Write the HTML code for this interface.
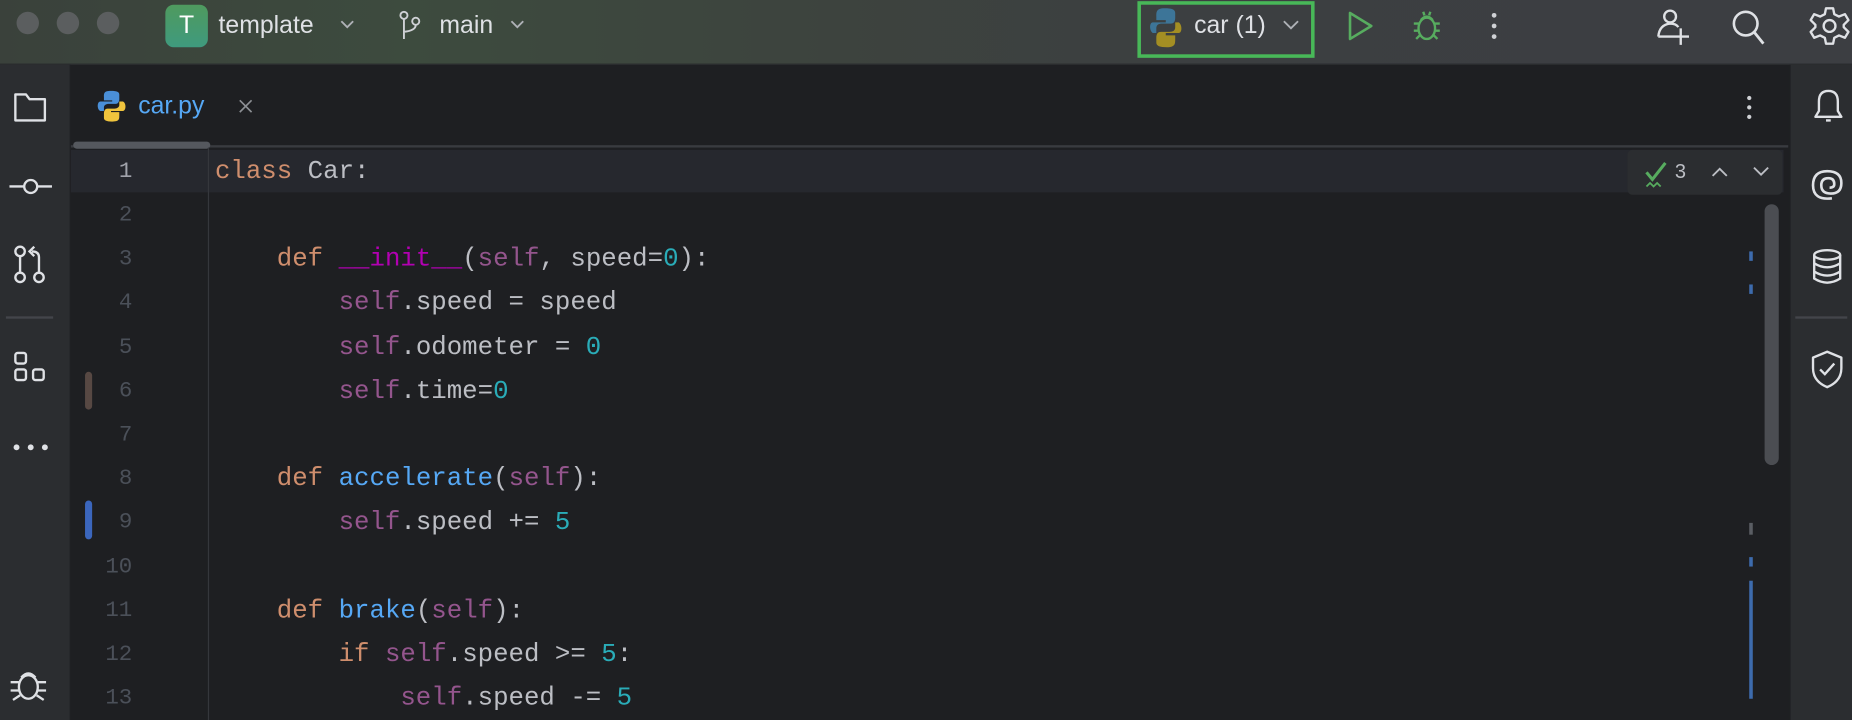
<!DOCTYPE html>
<html><head><meta charset="utf-8"><style>
html,body{margin:0;padding:0;background:#1e1f22;overflow:hidden;width:1852px;height:720px}
#w{position:absolute;left:0;top:0;width:1568px;height:610px;transform-origin:0 0;transform:scale(1.18112,1.18033);font-family:"Liberation Sans",sans-serif;background:#1e1f22}
.abs{position:absolute}
#title{left:0;top:0;width:1568px;height:54px;background:linear-gradient(90deg,#3a413b 0%,#3d4b3e 22%,#3d433e 45%,#3c3f41 65%,#3c3e42 100%);border-bottom:1px solid #2b2d30}
.dot{width:19px;height:19px;border-radius:50%;background:#5b5e5f;top:10px}
.tt{color:#dfe1e5;font-size:21px;top:10px}
#left{left:0;top:55px;width:59px;height:555px;background:#2b2d30;border-right:1px solid #1e1f22}
#right{left:1515px;top:55px;width:53px;height:555px;background:#2b2d30;border-left:1px solid #1e1f22}
.code{font-family:"Liberation Mono",monospace;font-size:21.8px;color:#bcbec4;white-space:pre;left:182px;height:37px;line-height:37px}
.ln{font-family:"Liberation Mono",monospace;font-size:19px;color:#4b5059;width:60px;text-align:right;left:52px;height:37px;line-height:37px}
.k{color:#cf8e6d}.s{color:#94558d}.f{color:#56a8f5}.m{color:#b200b2}.n{color:#2aacb8}
svg{position:absolute;overflow:visible}
</style></head><body><div id="w">
<div id="title" class="abs"></div>
<div class="abs dot" style="left:14px"></div><div class="abs dot" style="left:48px"></div><div class="abs dot" style="left:82px"></div>
<div class="abs" style="left:140px;top:4px;width:36px;height:36px;border-radius:7px;background:linear-gradient(180deg,#4f9a5e,#3f9a7e);color:#fff;font-size:21px;text-align:center;line-height:36px">T</div>
<div class="abs tt" style="left:185px">template</div>
<svg style="left:288px;top:17px" width="12" height="8"><path d="M1 1 L6 6 L11 1" stroke="#aeb1b6" stroke-width="1.6" fill="none"/></svg>
<svg style="left:338px;top:9px" width="20" height="26"><circle cx="4" cy="4" r="3" stroke="#cfd1d5" stroke-width="1.6" fill="none"/><circle cx="14" cy="9" r="3" stroke="#cfd1d5" stroke-width="1.6" fill="none"/><path d="M4 7 V24 M14 12 Q14 17 4 18" stroke="#cfd1d5" stroke-width="1.6" fill="none"/></svg>
<div class="abs tt" style="left:372px">main</div>
<svg style="left:432px;top:17px" width="12" height="8"><path d="M1 1 L6 6 L11 1" stroke="#aeb1b6" stroke-width="1.6" fill="none"/></svg>
<div class="abs" style="left:963px;top:1px;width:144px;height:42px;border:3px solid #48b858"></div>
<svg style="left:972px;top:6px" width="32" height="34"><path d="M14 1 C7 1 7 4 7 8 V11 H15 V13 H4 C1 13 1 20 4 22 H7 V18 C7 15 9 14 12 14 H19 C22 14 23 12 23 9 V5 C23 2 20 1 14 1Z" fill="#3d7598"/><path d="M16 34 C23 34 23 31 23 27 V24 H15 V22 H26 C29 22 29 15 26 13 H23 V17 C23 20 21 21 18 21 H11 C8 21 7 23 7 26 V30 C7 33 10 34 16 34Z" fill="#a38e23"/></svg>
<div class="abs tt" style="left:1011px;color:#dfe1e5">car (1)</div>
<svg style="left:1086px;top:17px" width="14" height="9"><path d="M1 1 L7 7 L13 1" stroke="#aeb1b6" stroke-width="1.6" fill="none"/></svg>
<svg style="left:1141px;top:9px" width="22" height="26"><path d="M2 2 L20 13 L2 24 Z" stroke="#57ac5f" stroke-width="2.2" fill="none" stroke-linejoin="round"/></svg>
<svg style="left:1194px;top:8px" width="28" height="28"><ellipse cx="14" cy="16" rx="7" ry="9" stroke="#57ac5f" stroke-width="2" fill="none"/><path d="M9 9 Q14 3 19 9 M3 12 H7 M21 12 H25 M3 18 H7 M21 18 H25 M5 25 L8 22 M23 25 L20 22 M11 2 L12 5 M17 2 L16 5" stroke="#57ac5f" stroke-width="2" fill="none"/></svg>
<svg style="left:1262px;top:10px" width="6" height="24"><circle cx="3" cy="3" r="2" fill="#cfd1d5"/><circle cx="3" cy="12" r="2" fill="#cfd1d5"/><circle cx="3" cy="21" r="2" fill="#cfd1d5"/></svg>
<svg style="left:1400px;top:6px" width="32" height="32"><circle cx="14" cy="8" r="5" stroke="#dfe1e5" stroke-width="2" fill="none"/><path d="M4 25 Q5 15 14 14 Q19 14 21 17 M4 25 H16 M23 18 V32 M16 25 H30" stroke="#dfe1e5" stroke-width="2" fill="none"/></svg>
<svg style="left:1465px;top:7px" width="32" height="32"><circle cx="13" cy="13" r="10" stroke="#dfe1e5" stroke-width="2.2" fill="none"/><path d="M20 20 L28 30" stroke="#dfe1e5" stroke-width="2.4"/></svg>
<svg style="left:1532px;top:5px" width="34" height="34"><circle cx="17" cy="17" r="5" stroke="#dfe1e5" stroke-width="2" fill="none"/><path d="M14 2 H20 L21 7 L25 9 L30 7 L33 12 L29 16 V18 L33 22 L30 27 L25 25 L21 27 L20 32 H14 L13 27 L9 25 L4 27 L1 22 L5 18 V16 L1 12 L4 7 L9 9 L13 7 Z" stroke="#dfe1e5" stroke-width="2" fill="none" stroke-linejoin="round"/></svg>

<div id="left" class="abs"></div>
<svg style="left:11px;top:78px" width="30" height="26"><path d="M2 2 H11 L14 6 H27 V24 H2 Z" stroke="#dfe1e5" stroke-width="2" fill="none" stroke-linejoin="round"/></svg>
<svg style="left:8px;top:150px" width="36" height="16"><circle cx="18" cy="8" r="5.5" stroke="#dfe1e5" stroke-width="2" fill="none"/><path d="M0 8 H12 M24 8 H36" stroke="#dfe1e5" stroke-width="2"/></svg>
<svg style="left:11px;top:208px" width="30" height="32"><circle cx="6" cy="5" r="4" stroke="#dfe1e5" stroke-width="2" fill="none"/><circle cx="6" cy="27" r="4" stroke="#dfe1e5" stroke-width="2" fill="none"/><circle cx="22" cy="27" r="4" stroke="#dfe1e5" stroke-width="2" fill="none"/><path d="M6 9 V23 M22 23 V10 Q22 5 16 5 M18 1 L14 5 L18 9" stroke="#dfe1e5" stroke-width="2" fill="none"/></svg>
<div class="abs" style="left:5px;top:268px;width:40px;height:2px;background:#43454a"></div>
<svg style="left:12px;top:298px" width="28" height="28"><rect x="1" y="1" width="9" height="9" rx="2" stroke="#dfe1e5" stroke-width="2" fill="none"/><rect x="1" y="15" width="9" height="9" rx="2" stroke="#dfe1e5" stroke-width="2" fill="none"/><rect x="16" y="15" width="9" height="9" rx="2" stroke="#dfe1e5" stroke-width="2" fill="none"/></svg>
<svg style="left:10px;top:375px" width="32" height="8"><circle cx="4" cy="4" r="2.5" fill="#dfe1e5"/><circle cx="16" cy="4" r="2.5" fill="#dfe1e5"/><circle cx="28" cy="4" r="2.5" fill="#dfe1e5"/></svg>
<svg style="left:8px;top:565px" width="32" height="30"><ellipse cx="16" cy="17" rx="8" ry="10" stroke="#dfe1e5" stroke-width="2" fill="none"/><path d="M10 9 Q16 2 22 9 M1 13 H8 M24 13 H31 M1 20 H8 M24 20 H31 M3 28 L9 24 M29 28 L23 24" stroke="#dfe1e5" stroke-width="2" fill="none"/></svg>

<svg style="left:82px;top:76px" width="26" height="28"><path d="M12 1 C6 1 6 3 6 6 V9 H13 V10 H3 C0 10 0 17 3 18 H6 V15 C6 13 8 12 10 12 H16 C18 12 19 10 19 8 V4 C19 2 17 1 12 1Z" fill="#4a8fd8"/><path d="M13 27 C19 27 19 25 19 22 V19 H12 V18 H22 C25 18 25 11 22 10 H19 V13 C19 15 17 16 15 16 H9 C7 16 6 18 6 20 V24 C6 26 8 27 13 27Z" fill="#f0c43d"/></svg>
<div class="abs" style="left:117px;top:78px;font-size:21px;color:#56a8f5">car.py</div>
<svg style="left:202px;top:84px" width="12" height="12"><path d="M1 1 L11 11 M11 1 L1 11" stroke="#8c8f94" stroke-width="1.4"/></svg>
<svg style="left:1478px;top:80px" width="6" height="22"><circle cx="3" cy="3" r="1.8" fill="#cfd1d5"/><circle cx="3" cy="11" r="1.8" fill="#cfd1d5"/><circle cx="3" cy="19" r="1.8" fill="#cfd1d5"/></svg>
<div class="abs" style="left:60px;top:123px;width:1454px;height:2px;background:#393b40"></div>
<div class="abs" style="left:62px;top:120px;width:116px;height:6px;border-radius:3px;background:#55585e"></div>

<div class="abs" style="left:60px;top:127px;width:1450px;height:36px;background:#26282e"></div>
<div class="abs" style="left:176px;top:125px;width:1px;height:485px;background:#35373c"></div>
<div class="abs" style="left:1378px;top:127px;width:131px;height:38px;background:#2b2d30;border-radius:4px"></div>
<svg style="left:1392px;top:136px" width="22" height="26"><path d="M2 10 L7 16 L18 2" stroke="#57ac5f" stroke-width="2.6" fill="none"/><path d="M2 22 L5 19 L8 22 L11 19 L14 22" stroke="#57ac5f" stroke-width="1.5" fill="none"/></svg>
<div class="abs" style="left:1418px;top:136px;font-size:17px;color:#bcbec4">3</div>
<svg style="left:1449px;top:141px" width="14" height="9"><path d="M1 8 L7 2 L13 8" stroke="#bcbec4" stroke-width="1.6" fill="none"/></svg>
<svg style="left:1484px;top:141px" width="14" height="9"><path d="M1 1 L7 7 L13 1" stroke="#bcbec4" stroke-width="1.6" fill="none"/></svg>
<div class="abs" style="left:1494px;top:173px;width:12px;height:221px;border-radius:6px;background:#4b4d52"></div>
<div class="abs" style="left:1481px;top:213px;width:3px;height:8px;background:#3d6bad"></div>
<div class="abs" style="left:1481px;top:241px;width:3px;height:8px;background:#3d6bad"></div>
<div class="abs" style="left:1481px;top:443px;width:3px;height:10px;background:#5a5d63"></div>
<div class="abs" style="left:1481px;top:472px;width:3px;height:8px;background:#3d6bad"></div>
<div class="abs" style="left:1481px;top:492px;width:3px;height:100px;background:#3d6bad"></div>
<div class="abs" style="left:72px;top:315px;width:6px;height:32px;border-radius:3px;background:#574843"></div>
<div class="abs" style="left:72px;top:424px;width:6px;height:33px;border-radius:3px;background:#3b66bd"></div>

<div class="abs ln" style="top:127px;color:#a1a3ab">1</div>
<div class="abs ln" style="top:164px">2</div>
<div class="abs ln" style="top:201px">3</div>
<div class="abs ln" style="top:238px">4</div>
<div class="abs ln" style="top:276px">5</div>
<div class="abs ln" style="top:313px">6</div>
<div class="abs ln" style="top:350px">7</div>
<div class="abs ln" style="top:387px">8</div>
<div class="abs ln" style="top:424px">9</div>
<div class="abs ln" style="top:462px">10</div>
<div class="abs ln" style="top:499px">11</div>
<div class="abs ln" style="top:536px">12</div>
<div class="abs ln" style="top:573px">13</div>

<div class="abs code" style="top:127px"><span class="k">class</span> Car:</div>
<div class="abs code" style="top:201px">    <span class="k">def</span> <span class="m">__init__</span>(<span class="s">self</span>, speed=<span class="n">0</span>):</div>
<div class="abs code" style="top:238px">        <span class="s">self</span>.speed = speed</div>
<div class="abs code" style="top:276px">        <span class="s">self</span>.odometer = <span class="n">0</span></div>
<div class="abs code" style="top:313px">        <span class="s">self</span>.time=<span class="n">0</span></div>
<div class="abs code" style="top:387px">    <span class="k">def</span> <span class="f">accelerate</span>(<span class="s">self</span>):</div>
<div class="abs code" style="top:424px">        <span class="s">self</span>.speed += <span class="n">5</span></div>
<div class="abs code" style="top:499px">    <span class="k">def</span> <span class="f">brake</span>(<span class="s">self</span>):</div>
<div class="abs code" style="top:536px">        <span class="k">if</span> <span class="s">self</span>.speed >= <span class="n">5</span>:</div>
<div class="abs code" style="top:573px">            <span class="s">self</span>.speed -= <span class="n">5</span></div>

<div id="right" class="abs"></div>
<svg style="left:1533px;top:73px" width="30" height="34"><path d="M4 26 H26 L23 21 V13 Q23 4 15 4 Q7 4 7 13 V21 Z M13 29 H17" stroke="#dfe1e5" stroke-width="2" fill="none" stroke-linejoin="round"/></svg>
<svg style="left:1531px;top:140px" width="32" height="34"><path d="M20 28 Q4 30 4 17 Q4 5 16 5 Q28 5 28 15 Q28 24 19 24 Q11 24 11 17 Q11 11 17 11 Q22 11 22 16 Q22 19 18 19" stroke="#dfe1e5" stroke-width="2.2" fill="none"/></svg>
<svg style="left:1533px;top:210px" width="28" height="32"><ellipse cx="14" cy="6" rx="11" ry="4" stroke="#dfe1e5" stroke-width="2" fill="none"/><path d="M3 6 V26 Q14 33 25 26 V6 M3 13 Q14 20 25 13 M3 20 Q14 27 25 20" stroke="#dfe1e5" stroke-width="2" fill="none"/></svg>
<div class="abs" style="left:1520px;top:268px;width:44px;height:2px;background:#43454a"></div>
<svg style="left:1533px;top:296px" width="28" height="34"><path d="M14 2 L26 7 V16 Q26 27 14 32 Q2 27 2 16 V7 Z" stroke="#dfe1e5" stroke-width="2" fill="none" stroke-linejoin="round"/><path d="M8 17 L12 21 L20 12" stroke="#dfe1e5" stroke-width="2" fill="none"/></svg>
</div></body></html>
